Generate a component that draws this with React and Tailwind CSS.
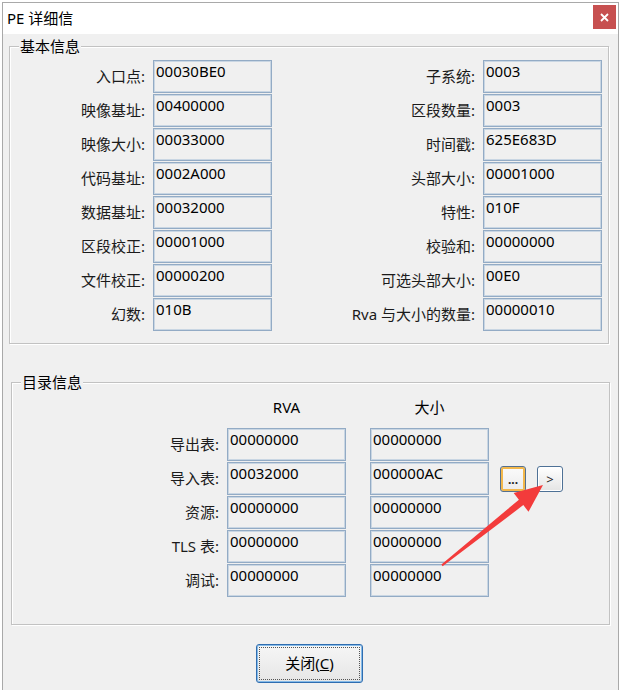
import React from 'react';

const font = { fontFamily: '"Noto Sans", "Noto Sans CJK SC", sans-serif' };

const info = [
    ['入口点:', '00030BE0', '子系统:', '0003'],
    ['映像基址:', '00400000', '区段数量:', '0003'],
    ['映像大小:', '00033000', '时间戳:', '625E683D'],
    ['代码基址:', '0002A000', '头部大小:', '00001000'],
    ['数据基址:', '00032000', '特性:', '010F'],
    ['区段校正:', '00001000', '校验和:', '00000000'],
    ['文件校正:', '00000200', '可选头部大小:', '00E0'],
    ['幻数:', '010B', 'Rva 与大小的数量:', '00000010'],
];

const dirs = [
    ['导出表:', '00000000', '00000000'],
    ['导入表:', '00032000', '000000AC'],
    ['资源:', '00000000', '00000000'],
    ['TLS 表:', '00000000', '00000000'],
    ['调试:', '00000000', '00000000'],
];

const Field = ({ value }) => (
    <div className="w-[119px] h-[33px] border border-[#93abc5] shadow-[inset_0_0_0_1px_#c9d6e3] pl-[2px] text-[15px] leading-[20px] text-black">
        {value}
    </div>
);

const Label = ({ text, w }) => (
    <div className={`${w} h-[33px] flex items-center justify-end text-[15px] text-[#1b1b1b]`}>{text}</div>
);

const Group = ({ title, className, children }) => (
    <div className={`relative border border-[#c2c2c2] shadow-[inset_1px_1px_0_#fff,1px_1px_0_#fff] ${className}`}>
        <span className="absolute left-[9px] -top-[11px] px-[1px] bg-[#f0f0f0] text-[15px] leading-[20px] text-black">{title}</span>
        {children}
    </div>
);

export default function App() {
    return (
        <div className="relative w-[620px] h-[690px] bg-white pt-[2px] overflow-hidden" style={font}>
            <div className="ml-[2px] w-[617px] h-[700px] border-t border-x border-[#a9a9a9] bg-[#f0f0f0] flex flex-col">
                <div className="h-[31px] bg-white flex items-start justify-between">
                    <span className="ml-[4px] mt-[5px] text-[15px] leading-[20px] text-black">PE 详细信</span>
                    <div className="mt-[2px] mr-[2px] w-[23px] h-[24px] bg-[#c75050] flex items-center justify-center">
                        <svg width="9" height="9" viewBox="0 0 9 9">
                            <path d="M1 1L8 8M8 1L1 8" stroke="#fff" strokeWidth="1.8" />
                        </svg>
                    </div>
                </div>

                <Group title="基本信息" className="ml-[6px] mt-[12px] w-[600px] h-[298px] pt-[13px]">
                    {info.map(([l1, v1, l2, v2], i) => (
                        <div key={i} className="flex items-start h-[34px]">
                            <Label text={l1} w="w-[135px]" />
                            <div className="ml-[8px]"><Field value={v1} /></div>
                            <Label text={l2} w="w-[203px]" />
                            <div className="ml-[8px]"><Field value={v2} /></div>
                        </div>
                    ))}
                </Group>

                <Group title="目录信息" className="ml-[8px] mt-[38px] w-[599px] h-[243px] pt-[12px]">
                    <div className="flex h-[24px] items-center text-[15px] text-black">
                        <div className="w-[207px]" />
                        <div className="ml-[8px] w-[119px] text-center">RVA</div>
                        <div className="ml-[24px] w-[119px] text-center">大小</div>
                    </div>
                    <div className="mt-[9px]">
                        {dirs.map(([l, rva, size], i) => (
                            <div key={i} className="flex items-start h-[34px]">
                                <Label text={l} w="w-[207px]" />
                                <div className="ml-[8px]"><Field value={rva} /></div>
                                <div className="ml-[24px]"><Field value={size} /></div>
                                {i === 1 && (
                                    <div className="flex items-center h-[33px]">
                                        <button className="ml-[11px] w-[26px] h-[26px] rounded-[3px] border border-[#55708e] bg-gradient-to-b from-[#fbfbfb] to-[#ececec] shadow-[inset_0_0_0_2px_#f3b84c] text-[12px] leading-[14px] font-bold text-[#222] flex items-end justify-center pb-[4px]">
                                            ...
                                        </button>
                                        <button className="ml-[11px] w-[26px] h-[26px] rounded-[3px] border border-[#4e7196] bg-gradient-to-b from-white to-[#e4e4e4] shadow-[inset_0_0_0_1px_#fff] text-[13px] leading-[16px] text-[#222] flex items-center justify-center">
                                            &gt;
                                        </button>
                                    </div>
                                )}
                            </div>
                        ))}
                    </div>
                </Group>

                <button className="ml-[253px] mt-[19px] w-[107px] h-[39px] rounded-[3px] border border-[#2f6db0] shadow-[inset_0_0_0_1px_#86bbe8] bg-gradient-to-b from-[#f6f6f6] to-[#e6e6e6] outline outline-1 outline-dotted outline-[#555] -outline-offset-4 text-[15px] text-black flex items-center justify-center">
                    关闭(<span className="underline">C</span>)
                </button>
            </div>

            <svg className="absolute inset-0 pointer-events-none" width="620" height="690" viewBox="0 0 620 690">
                <polygon
                    points="441.4,564.6 518.9,499.7 513.7,493.0 543,485 528.5,511.8 523.3,505.1 442.6,566.2"
                    fill="#f33b3b"
                />
            </svg>
        </div>
    );
}
